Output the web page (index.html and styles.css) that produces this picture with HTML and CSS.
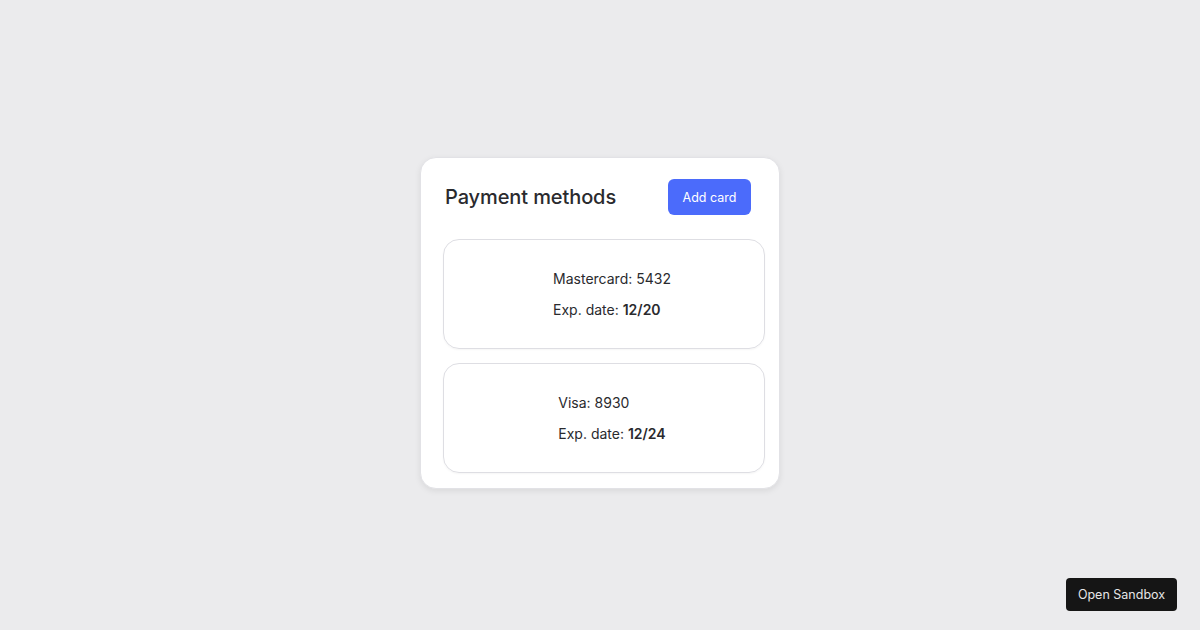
FILE: index.html
```html
<!DOCTYPE html>
<html lang="en">

<head>
    <meta charset="UTF-8">
    <meta name="viewport" content="width=device-width, initial-scale=1.0">
    <title>Payment methods</title>
    <link rel="stylesheet" href="styles.css">
</head>

<body>
    <main class="wrapper">
        <section class="painel">
            <div class="painel_topo">
                <h1 class="titulo">Payment methods</h1>
                <button class="botao_add">Add card</button>
            </div>

            <div class="cartao">
                <div class="cartao_info">
                    <p>Mastercard: 5432</p>
                    <p>Exp. date: <b>12/20</b></p>
                </div>
            </div>
            <div class="cartao">
                <div class="cartao_info">
                    <p>Visa: 8930</p>
                    <p>Exp. date: <b>12/24</b></p>
                </div>
            </div>
        </section>
    </main>

    <a class="sandbox" href="#">Open Sandbox</a>
</body>

</html>
```

FILE: styles.css
```css
* {
    margin: 0;
    padding: 0;
    box-sizing: border-box;
}
body{
    font-family: Inter, 'Noto Sans', sans-serif;
    background-color: #ebebed;
    color: #2a2a2e;
    height: 630px;
    overflow: hidden;
}
.wrapper{
    display: flex;
    justify-content: center;
    padding-top: 157px;
}
.painel{
    width: 360px;
    background-color: #ffffff;
    border: 1px solid #e2e2e6;
    border-radius: 16px;
    box-shadow: 0 2px 6px rgba(0, 0, 0, 0.08);
    padding: 21px 14px 15px 22px;
    display: flex;
    flex-direction: column;
    gap: 14px;
}
.painel_topo{
    display: flex;
    justify-content: space-between;
    align-items: center;
    padding-left: 2px;
    padding-right: 14px;
    margin-bottom: 10px;
}
.titulo{
    font-size: 20px;
    font-weight: 500;
    letter-spacing: -0.1px;
}
.botao_add{
    font-family: Inter, sans-serif;
    font-size: 12.5px;
    color: #ffffff;
    background-color: #4b6bfb;
    border: none;
    border-radius: 6px;
    width: 83px;
    height: 36px;
}
.cartao{
    height: 110px;
    border: 1px solid #dedee3;
    border-radius: 16px;
    box-shadow: 0 1px 2px rgba(0, 0, 0, 0.04);
    display: flex;
    justify-content: center;
    align-items: center;
    padding-left: 16px;
}
.cartao_info{
    display: flex;
    flex-direction: column;
    gap: 11px;
    font-size: 14px;
    line-height: 20px;
}
.cartao_info b{
    font-weight: 600;
}
.sandbox{
    position: absolute;
    right: 23px;
    bottom: 19px;
    width: 111px;
    height: 33px;
    display: flex;
    align-items: center;
    justify-content: center;
    background-color: #151515;
    color: #e6e6e6;
    font-size: 12.5px;
    text-decoration: none;
    border-radius: 4px;
}
```
